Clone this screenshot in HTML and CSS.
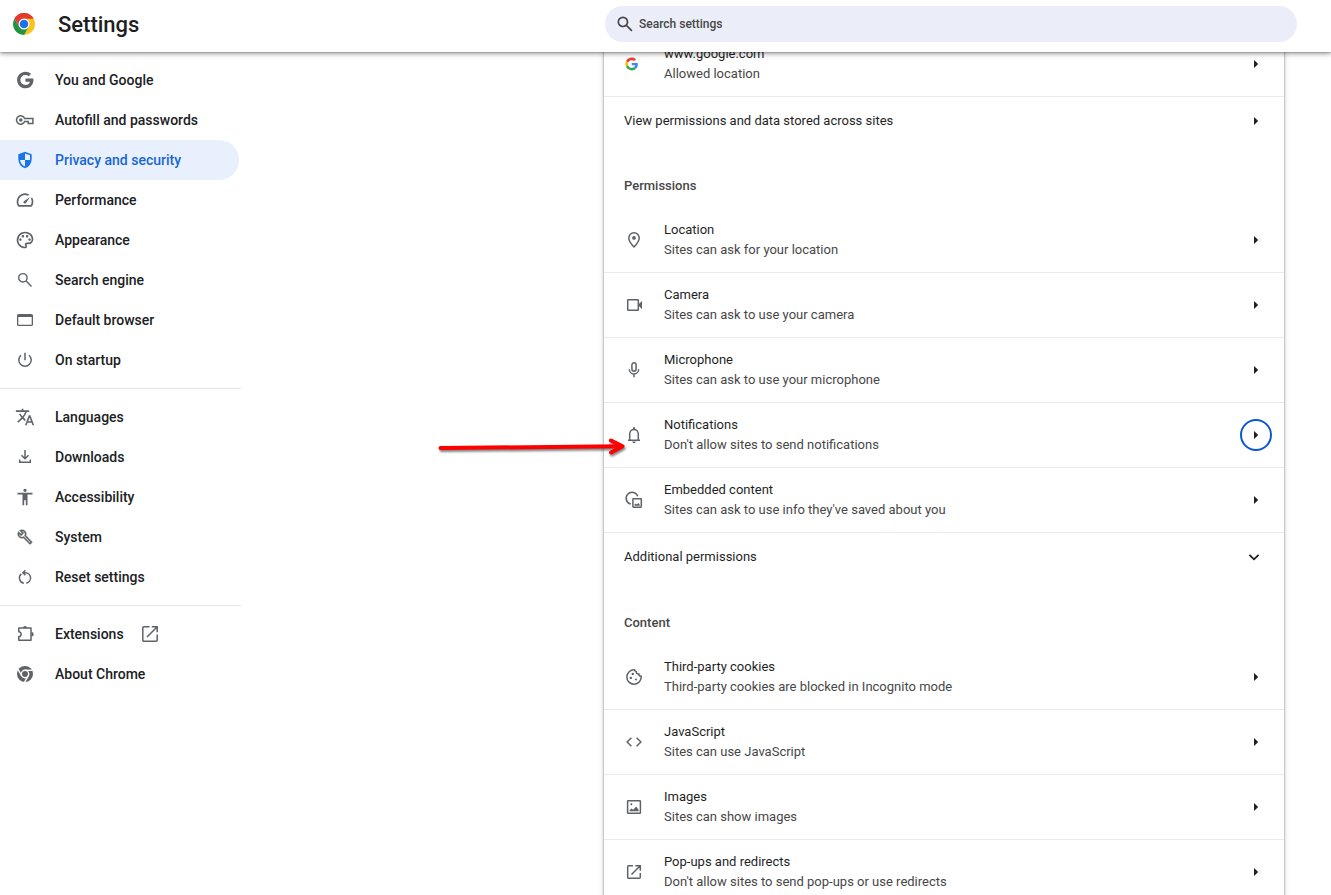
FILE: index.html
```html
<!DOCTYPE html>
<html lang="en">
<head>
<meta charset="utf-8">
<title>Settings</title>
<meta name="viewport" content="width=device-width, initial-scale=1">
<link rel="stylesheet" href="styles.css">
</head>
<body class="page">
<svg class="sprite" aria-hidden="true">
  <symbol id="i-google" viewBox="0 0 24 24"><path fill="currentColor" d="M12.545 10.239v3.821h5.445c-.712 2.315-2.647 3.972-5.445 3.972a6.033 6.033 0 1 1 0-12.064c1.498 0 2.866.549 3.921 1.453l2.814-2.814A9.97 9.97 0 0 0 12.545 2C7.021 2 2.543 6.477 2.543 12s4.478 10 10.002 10c8.396 0 10.249-7.85 9.426-11.748z"/></symbol>
  <symbol id="i-key" viewBox="0 0 20 20"><g fill="none" stroke="currentColor" stroke-width="1.5"><path d="M9.6 8.5A4.2 4.2 0 1 0 9.6 11.5H13.2V13.6H17.9V8.5Z"/></g><circle cx="5.8" cy="10" r="1.8" fill="currentColor"/></symbol>
  <symbol id="i-shield" viewBox="0 -960 960 960"><path fill="currentColor" transform="translate(960 0) scale(-1 1)" d="M480-80q-139-35-229.500-159.500T160-516v-244l320-120 320 120v244q0 152-90.500 276.500T480-80Zm0-84q97-30 162-118.500T718-480H480v-315l-240 90v207q0 7 2 18h238v316Z"/></symbol>
  <symbol id="i-speed" viewBox="0 -960 960 960"><path fill="currentColor" d="M418-340q24 24 62 23.500t56-27.500l184-276-276 184q-27 18-38.500 45t12.500 51Zm62-460q59 0 113.500 16.500T696-734l-76 48q-33-17-68.500-25.500T480-720q-133 0-226.500 93.500T160-400q0 42 11.500 83t32.500 77h552q23-38 33.500-79t10.500-85q0-36-8.500-70T766-540l48-76q30 47 47.500 100T880-404q1 59-13 112t-41 98q-11 18-30 28t-40 10H204q-21 0-40-10t-30-28q-26-45-40-95.500T80-400q0-83 31.500-155.500t86-127Q252-737 325-768.500T480-800Z"/></symbol>
  <symbol id="i-palette" viewBox="0 -960 960 960"><path fill="currentColor" d="M480-80q-82 0-155-31.500t-127.500-86Q143-252 111.500-325T80-480q0-83 32.500-156t88-127Q256-817 330-848.500T488-880q80 0 151 27.500t124.500 76q53.500 48.500 85 115T880-518q0 115-70 176.500T640-280h-74q-9 0-12.500 5t-3.500 11q0 12 15 34.500t15 51.500q0 50-27.500 74T480-80ZM260-440q26 0 43-17t17-43q0-26-17-43t-43-17q-26 0-43 17t-17 43q0 26 17 43t43 17Zm120-160q26 0 43-17t17-43q0-26-17-43t-43-17q-26 0-43 17t-17 43q0 26 17 43t43 17Zm200 0q26 0 43-17t17-43q0-26-17-43t-43-17q-26 0-43 17t-17 43q0 26 17 43t43 17Zm120 160q26 0 43-17t17-43q0-26-17-43t-43-17q-26 0-43 17t-17 43q0 26 17 43t43 17ZM480-160q9 0 14.500-5t5.500-13q0-14-15-33t-15-57q0-42 29-67t71-25h70q66 0 113-38.500T800-518q0-121-92.500-201.500T488-800q-136 0-232 93t-96 227q0 133 93.500 226.500T480-160Z"/></symbol>
  <symbol id="i-search" viewBox="0 -960 960 960"><path fill="currentColor" d="M784-120 532-372q-30 24-69 38t-83 14q-109 0-184.500-75.500T120-580q0-109 75.500-184.500T380-840q109 0 184.500 75.500T640-580q0 44-14 83t-38 69l252 252-56 56ZM380-400q75 0 127.500-52.500T560-580q0-75-52.500-127.500T380-760q-75 0-127.500 52.500T200-580q0 75 52.500 127.500T380-400Z"/></symbol>
  <symbol id="i-search-thin" viewBox="0 0 20 20"><g fill="none" stroke="currentColor" stroke-width="1.400"><circle cx="7.900" cy="7.800" r="4.200"/><path d="M10.900 10.800 16.500 16.400"/></g></symbol>
  <symbol id="i-browser" viewBox="0 0 20 20"><path fill="currentColor" fill-rule="evenodd" d="M3.500 4h13A1.500 1.500 0 0 1 18 5.500v9a1.500 1.500 0 0 1-1.500 1.500h-13A1.500 1.500 0 0 1 2 14.500v-9A1.500 1.500 0 0 1 3.500 4ZM3.300 7v7.700h13.400V7Z"/></symbol>
  <symbol id="i-power" viewBox="0 0 20 20"><path fill="none" stroke="currentColor" stroke-width="1.500" d="M10 2.800V10.200M6 5.200A6.200 6.200 0 1 0 14 5.200"/></symbol>
  <symbol id="i-translate" viewBox="0 0 24 24"><path fill="currentColor" d="M12.870 15.070l-2.540-2.510.03-.03c1.740-1.940 2.980-4.170 3.710-6.530H17V4h-7V2H8v2H1v1.990h11.170C11.500 7.920 10.440 9.750 9 11.350 8.070 10.320 7.300 9.190 6.690 8h-2c.73 1.630 1.730 3.170 2.980 4.560l-5.090 5.020L4 19l5-5 3.110 3.110.76-2.040zM18.500 10h-2L12 22h2l1.120-3h4.750L21 22h2l-4.500-12zm-2.620 7l1.620-4.330L19.120 17h-3.240z"/></symbol>
  <symbol id="i-download" viewBox="0 0 20 20"><path fill="none" stroke="currentColor" stroke-width="1.500" d="M10 3V11.500M6.500 8.300 10 11.800l3.500-3.500M4.700 12.600v2.700H15.300V12.600"/></symbol>
  <symbol id="i-access" viewBox="0 0 24 24"><path fill="currentColor" d="M12 2a2 2 0 1 1 0 4 2 2 0 0 1 0-4zm9 7h-6v13h-2v-6h-2v6H9V9H3V7h18v2z"/></symbol>
  <symbol id="i-wrench" viewBox="-3 -3 30 30"><path fill="currentColor" stroke="currentColor" stroke-width=".5" d="M22.610 18.990l-9.080-9.080c.93-2.340.45-5.100-1.440-7C9.790.61 6.210.4 3.660 2.260L7.500 6.110 6.080 7.520 2.250 3.690C.39 6.230.6 9.820 2.900 12.110c1.860 1.860 4.570 2.350 6.890 1.480l9.110 9.110c.39.39 1.020.39 1.410 0l2.300-2.300c.4-.38.4-1.010 0-1.410zm-3 1.600l-9.460-9.460c-.61.45-1.290.72-2 .82-1.360.2-2.790-.21-3.830-1.250C3.370 9.760 2.930 8.500 3 7.260l3.090 3.090 4.240-4.240-3.090-3.090c1.240-.07 2.490.37 3.440 1.310 1.080 1.080 1.490 2.570 1.240 3.960-.12.71-.42 1.370-.88 1.960l9.450 9.450-.88.89z"/></symbol>
  <symbol id="i-reset" viewBox="0 0 20 20"><path fill="none" stroke="currentColor" stroke-width="1.500" d="M8.200 5.700H10.200A5.300 5.300 0 0 1 11.300 16.200M10.400 3.200 7.900 5.700l2.500 2.500M6.400 6.900A5.300 5.300 0 0 0 8.800 16.200"/></symbol>
  <symbol id="i-extension" viewBox="0 0 20 20"><path fill="none" stroke="currentColor" stroke-width="1.500" stroke-linejoin="round" d="M3.800 4H16V8.400V16.200H3.800V12.500A2.200 2.200 0 0 0 3.800 7.800Z"/><path fill="currentColor" d="M8 4a2 2 0 0 1 4 0ZM16.500 8a2 2 0 0 1 0 4.400Z"/></symbol>
  <symbol id="i-chrome" viewBox="0 0 20 20"><circle cx="10" cy="10" r="8" fill="currentColor"/><g fill="none" stroke="#fff" stroke-width="1.400"><circle cx="10" cy="10" r="3.700"/><path d="M10 6.300H17.500"/><path d="M10 6.300H17.500" transform="rotate(120 10 10)"/><path d="M10 6.300H17.500" transform="rotate(240 10 10)"/></g></symbol>
  <symbol id="i-open" viewBox="0 0 20 20"><path fill="none" stroke="currentColor" stroke-width="1.500" d="M9.500 2.800H4A1.200 1.200 0 0 0 2.800 4V16A1.200 1.200 0 0 0 4 17.200H16A1.200 1.200 0 0 0 17.200 16V10.500M11.800 2.800H17.200V8.200M17 3 7 13"/></symbol>
  <symbol id="i-popup" viewBox="0 0 20 20"><path fill="none" stroke="currentColor" stroke-width="1.500" d="M9 3.700H4.600A1 1 0 0 0 3.700 4.700V15.400A1 1 0 0 0 4.700 16.300H15.300A1 1 0 0 0 16.300 15.300V11M11.300 3.700H16.300V8.700M16 4 7.500 12.500"/></symbol>
  <symbol id="i-location" viewBox="0 0 20 20"><path fill="none" stroke="currentColor" stroke-width="1.500" d="M10 17C7.600 14.500 4.800 11.400 4.800 8a5.200 5.200 0 0 1 10.400 0c0 3.400-2.800 6.500-5.200 9Z"/><circle cx="10" cy="7.900" r="1.900" fill="currentColor"/></symbol>
  <symbol id="i-camera" viewBox="0 0 20 20"><rect x="3.700" y="4.700" width="10.600" height="10.600" rx=".6" fill="none" stroke="currentColor" stroke-width="1.500"/><path fill="currentColor" d="M14.500 9.300 18 6v8l-3.500-3.300Z"/></symbol>
  <symbol id="i-mic" viewBox="0 0 20 20"><g fill="none" stroke="currentColor" stroke-width="1.500"><rect x="7.900" y="2.800" width="4.200" height="8.400" rx="2.100"/><path d="M5.300 9.200a4.700 4.700 0 0 0 9.400 0M10 14v3.300"/></g></symbol>
  <symbol id="i-bell" viewBox="0 0 20 20"><path fill="none" stroke="currentColor" stroke-width="1.500" d="M4 15.200H16M5.700 15.200V8.800a4.300 4.300 0 0 1 8.600 0V15.200"/><path fill="currentColor" d="M9 2.300h2V5H9ZM8.300 16.500h3.400a1.700 1.700 0 0 1-3.400 0Z"/></symbol>
  <symbol id="i-embed" viewBox="0 0 20 20"><g fill="none" stroke="currentColor" stroke-width="1.500"><path d="M13.800 6.200A6 6 0 1 0 6.700 14.100"/><rect x="8.900" y="8.700" width="8.400" height="8.500" rx=".6"/></g><path fill="currentColor" d="M10.500 15.700v-1.200l1.200-1 1.300 1.100 1.300-1.600 1.500 1.700v1Z"/></symbol>
  <symbol id="i-cookie" viewBox="0 0 20 20"><path fill="none" stroke="currentColor" stroke-width="1.500" d="M10.500 2.800A7.200 7.200 0 1 0 17.200 9.300Q14.800 9 14.700 6.900 12 7 12.200 4.600 10.800 4.300 10.500 2.800Z"/><g fill="currentColor"><circle cx="8.800" cy="6.900" r="1.200"/><circle cx="6.800" cy="10.900" r="1.200"/><circle cx="12" cy="12.400" r="1"/></g></symbol>
  <symbol id="i-code" viewBox="0 0 20 20"><path fill="none" stroke="currentColor" stroke-width="1.500" d="M7.400 5.700 3.100 10l4.300 4.300M12.600 5.700 16.900 10l-4.300 4.300"/></symbol>
  <symbol id="i-image" viewBox="0 0 20 20"><rect x="3.600" y="3.700" width="12.800" height="12.600" rx=".6" fill="none" stroke="currentColor" stroke-width="1.500"/><path fill="currentColor" d="M5.500 14.200v-1l2-1.800 1.700 1.400 3-3.200 2.500 3.300v1.300Z"/><circle cx="7.300" cy="7.200" r="1" fill="currentColor"/></symbol>
  <symbol id="i-arrow" viewBox="0 0 20 20"><path fill="currentColor" d="M8 6l4.200 4L8 14Z"/></symbol>
  <symbol id="i-chevron" viewBox="0 0 20 20"><path fill="none" stroke="currentColor" stroke-width="1.800" d="M5.400 7.800 10 12.300l4.600-4.500"/></symbol>
</svg>

<header class="toolbar">
  <svg class="logo" viewBox="0 0 48 48" aria-hidden="true">
    <path fill="#e33b2e" d="M24 24 4.950 13A22 22 0 0 1 43.050 13Z"/>
    <path fill="#fcc31e" d="M24 24V13H43.050A22 22 0 0 1 24 46Z"/>
    <path fill="#229342" d="M24 24 33.530 29.500 24 46A22 22 0 0 1 4.950 13L14.470 29.500Z"/>
    <path fill="#e33b2e" d="M24 13H43.050A22 22 0 0 0 4.950 13L14.470 29.500Z"/>
    <circle cx="24" cy="24" r="11" fill="#fff"/>
    <circle cx="24" cy="24" r="8.600" fill="#1a73e8"/>
  </svg>
  <h1 class="toolbar-title">Settings</h1>
  <label class="search">
    <svg class="icon" aria-hidden="true"><use href="#i-search"/></svg>
    <input class="search-input" type="search" placeholder="Search settings" aria-label="Search settings">
  </label>
</header>

<div class="layout">
  <nav class="menu" aria-label="Settings">
    <a class="menu-item" href="#you"><svg class="icon" aria-hidden="true"><use href="#i-google"/></svg>You and Google</a>
    <a class="menu-item" href="#autofill"><svg class="icon" aria-hidden="true"><use href="#i-key"/></svg>Autofill and passwords</a>
    <a class="menu-item menu-item-selected" href="#privacy" aria-current="page"><svg class="icon" aria-hidden="true"><use href="#i-shield"/></svg>Privacy and security</a>
    <a class="menu-item" href="#performance"><svg class="icon" aria-hidden="true"><use href="#i-speed"/></svg>Performance</a>
    <a class="menu-item" href="#appearance"><svg class="icon" aria-hidden="true"><use href="#i-palette"/></svg>Appearance</a>
    <a class="menu-item" href="#search"><svg class="icon" aria-hidden="true"><use href="#i-search-thin"/></svg>Search engine</a>
    <a class="menu-item" href="#default"><svg class="icon" aria-hidden="true"><use href="#i-browser"/></svg>Default browser</a>
    <a class="menu-item" href="#startup"><svg class="icon" aria-hidden="true"><use href="#i-power"/></svg>On startup</a>
    <hr class="menu-rule">
    <a class="menu-item" href="#languages"><svg class="icon" aria-hidden="true"><use href="#i-translate"/></svg>Languages</a>
    <a class="menu-item" href="#downloads"><svg class="icon" aria-hidden="true"><use href="#i-download"/></svg>Downloads</a>
    <a class="menu-item" href="#accessibility"><svg class="icon" aria-hidden="true"><use href="#i-access"/></svg>Accessibility</a>
    <a class="menu-item" href="#system"><svg class="icon" aria-hidden="true"><use href="#i-wrench"/></svg>System</a>
    <a class="menu-item" href="#reset"><svg class="icon" aria-hidden="true"><use href="#i-reset"/></svg>Reset settings</a>
    <hr class="menu-rule">
    <a class="menu-item" href="#extensions"><svg class="icon" aria-hidden="true"><use href="#i-extension"/></svg>Extensions<svg class="icon menu-external" aria-hidden="true"><use href="#i-open"/></svg></a>
    <a class="menu-item" href="#about"><svg class="icon" aria-hidden="true"><use href="#i-chrome"/></svg>About Chrome</a>
  </nav>

  <main class="content">
    <div class="card">
      <div class="row">
        <span class="row-icon"><svg class="favicon" viewBox="-5 -6 60 60" aria-hidden="true">
          <path fill="#ea4335" d="M24 9.500c3.540 0 6.710 1.220 9.210 3.600l6.850-6.850C35.900 2.380 30.470 0 24 0 14.620 0 6.510 5.380 2.560 13.220l7.980 6.190C12.430 13.720 17.740 9.500 24 9.500z"/>
          <path fill="#4285f4" d="M46.980 24.550c0-1.570-.15-3.090-.38-4.550H24v9.020h12.940c-.58 2.960-2.260 5.480-4.780 7.180l7.730 6c4.510-4.180 7.090-10.360 7.090-17.650z"/>
          <path fill="#fbbc05" d="M10.530 28.590c-.48-1.450-.76-2.990-.76-4.590s.27-3.140.76-4.590l-7.980-6.190A23.900 23.900 0 0 0 0 24c0 3.880.92 7.540 2.560 10.780l7.970-6.190z"/>
          <path fill="#34a853" d="M24 48c6.480 0 11.930-2.130 15.890-5.810l-7.730-6c-2.150 1.450-4.920 2.300-8.160 2.300-6.260 0-11.570-4.220-13.470-9.910l-7.980 6.190C6.510 42.620 14.620 48 24 48z"/>
        </svg></span>
        <div class="row-text"><div class="row-title" id="t-google">www.google.com</div><div class="row-sub">Allowed location</div></div>
        <button class="go" type="button" aria-labelledby="t-google"><svg class="icon" aria-hidden="true"><use href="#i-arrow"/></svg></button>
      </div>
      <div class="row row-short row-ruled">
        <div class="row-text"><div class="row-title" id="t-view">View permissions and data stored across sites</div></div>
        <button class="go" type="button" aria-labelledby="t-view"><svg class="icon" aria-hidden="true"><use href="#i-arrow"/></svg></button>
      </div>

      <h2 class="section-title">Permissions</h2>
      <div class="row">
        <span class="row-icon"><svg class="icon" aria-hidden="true"><use href="#i-location"/></svg></span>
        <div class="row-text"><div class="row-title" id="t-loc">Location</div><div class="row-sub">Sites can ask for your location</div></div>
        <button class="go" type="button" aria-labelledby="t-loc"><svg class="icon" aria-hidden="true"><use href="#i-arrow"/></svg></button>
      </div>
      <div class="row row-ruled">
        <span class="row-icon"><svg class="icon" aria-hidden="true"><use href="#i-camera"/></svg></span>
        <div class="row-text"><div class="row-title" id="t-cam">Camera</div><div class="row-sub">Sites can ask to use your camera</div></div>
        <button class="go" type="button" aria-labelledby="t-cam"><svg class="icon" aria-hidden="true"><use href="#i-arrow"/></svg></button>
      </div>
      <div class="row row-ruled">
        <span class="row-icon"><svg class="icon" aria-hidden="true"><use href="#i-mic"/></svg></span>
        <div class="row-text"><div class="row-title" id="t-mic">Microphone</div><div class="row-sub">Sites can ask to use your microphone</div></div>
        <button class="go" type="button" aria-labelledby="t-mic"><svg class="icon" aria-hidden="true"><use href="#i-arrow"/></svg></button>
      </div>
      <div class="row row-ruled">
        <span class="row-icon"><svg class="icon" aria-hidden="true"><use href="#i-bell"/></svg></span>
        <div class="row-text"><div class="row-title" id="t-not">Notifications</div><div class="row-sub">Don't allow sites to send notifications</div></div>
        <button class="go go-focused" type="button" aria-labelledby="t-not"><svg class="icon" aria-hidden="true"><use href="#i-arrow"/></svg></button>
        <svg class="pointer" viewBox="0 0 200 30" aria-hidden="true">
          <path d="M6.500 15 187 13.200" stroke-width="4"/>
          <path d="M177 7.500 188.500 13.200 177 19.500" stroke-width="4"/>
        </svg>
      </div>
      <div class="row row-ruled">
        <span class="row-icon"><svg class="icon" aria-hidden="true"><use href="#i-embed"/></svg></span>
        <div class="row-text"><div class="row-title" id="t-emb">Embedded content</div><div class="row-sub">Sites can ask to use info they've saved about you</div></div>
        <button class="go" type="button" aria-labelledby="t-emb"><svg class="icon" aria-hidden="true"><use href="#i-arrow"/></svg></button>
      </div>
      <button class="row row-short row-ruled expand" type="button" aria-expanded="false">
        <span class="row-text row-title">Additional permissions</span>
        <svg class="icon expand-icon" aria-hidden="true"><use href="#i-chevron"/></svg>
      </button>

      <h2 class="section-title">Content</h2>
      <div class="row">
        <span class="row-icon"><svg class="icon" aria-hidden="true"><use href="#i-cookie"/></svg></span>
        <div class="row-text"><div class="row-title" id="t-cook">Third-party cookies</div><div class="row-sub">Third-party cookies are blocked in Incognito mode</div></div>
        <button class="go" type="button" aria-labelledby="t-cook"><svg class="icon" aria-hidden="true"><use href="#i-arrow"/></svg></button>
      </div>
      <div class="row row-ruled">
        <span class="row-icon"><svg class="icon" aria-hidden="true"><use href="#i-code"/></svg></span>
        <div class="row-text"><div class="row-title" id="t-js">JavaScript</div><div class="row-sub">Sites can use JavaScript</div></div>
        <button class="go" type="button" aria-labelledby="t-js"><svg class="icon" aria-hidden="true"><use href="#i-arrow"/></svg></button>
      </div>
      <div class="row row-ruled">
        <span class="row-icon"><svg class="icon" aria-hidden="true"><use href="#i-image"/></svg></span>
        <div class="row-text"><div class="row-title" id="t-img">Images</div><div class="row-sub">Sites can show images</div></div>
        <button class="go" type="button" aria-labelledby="t-img"><svg class="icon" aria-hidden="true"><use href="#i-arrow"/></svg></button>
      </div>
      <div class="row row-ruled">
        <span class="row-icon"><svg class="icon" aria-hidden="true"><use href="#i-popup"/></svg></span>
        <div class="row-text"><div class="row-title" id="t-pop">Pop-ups and redirects</div><div class="row-sub">Don't allow sites to send pop-ups or use redirects</div></div>
        <button class="go" type="button" aria-labelledby="t-pop"><svg class="icon" aria-hidden="true"><use href="#i-arrow"/></svg></button>
      </div>
    </div>
  </main>
</div>
</body>
</html>
```
FILE: styles.css
```css
* {
  box-sizing: border-box;
}

.page {
  margin: 0;
  height: 100vh;
  display: flex;
  flex-direction: column;
  overflow: hidden;
  background: #fff;
  color: #1f1f1f;
  font: 400 13px/20px Roboto, "Liberation Sans", sans-serif;
}

.sprite {
  position: absolute;
  width: 0;
  height: 0;
}

.icon {
  width: 20px;
  height: 20px;
  flex: none;
  display: block;
}

/* Top bar */
.toolbar {
  position: relative;
  z-index: 1;
  flex: none;
  display: flex;
  align-items: center;
  padding: 6px 34px 10px 12px;
  background: #fff;
  box-shadow: 0 0 2px rgba(0, 0, 0, .45), 0 2px 5px rgba(0, 0, 0, .35);
}

.logo {
  width: 24px;
  height: 24px;
  flex: none;
}

.toolbar-title {
  margin: 0 auto 0 22px;
  padding-top: 2px;
  font-size: 22px;
  font-weight: 500;
  line-height: 32px;
}

.search {
  flex: 0 1 692px;
  height: 36px;
  display: flex;
  align-items: center;
  gap: 4px;
  padding: 0 10px;
  border-radius: 18px;
  background: #ebeef8;
  color: #474747;
}

.search-input {
  flex: 1;
  min-width: 0;
  padding: 0;
  border: 0;
  outline: 0;
  background: transparent;
  color: #1f1f1f;
  font: 500 12px/20px Roboto, "Liberation Sans", sans-serif;
}

.search-input::placeholder {
  color: #474747;
  opacity: 1;
}

/* Page columns */
.layout {
  flex: 1;
  min-height: 0;
  display: flex;
}

.menu {
  flex: 0 0 241px;
  padding-top: 8px;
}

.menu-item {
  display: flex;
  align-items: center;
  gap: 20px;
  height: 40px;
  margin-right: 2px;
  padding-left: 15px;
  border-radius: 0 20px 20px 0;
  color: #202124;
  font-size: 14px;
  font-weight: 500;
  text-decoration: none;
}

.menu-item .icon {
  color: #5f6368;
}

.menu-item-selected {
  background: #e8f0fe;
  color: #1967d2;
}

.menu-item-selected .icon {
  color: #1a73e8;
}

.menu-item .menu-external {
  margin-left: -4px;
}

.menu-rule {
  height: 1px;
  margin: 8px 0;
  border: 0;
  background: #e6e6e6;
}

.content {
  flex: 1;
  min-width: 0;
  display: flex;
  justify-content: flex-end;
  overflow: hidden;
  padding-right: 47px;
}

/* The list is shown part-way scrolled under the top bar. */
.card {
  flex: 0 1 680px;
  min-width: 0;
  height: max-content;
  margin-top: -20px;
  padding-bottom: 12px;
  background: #fff;
  box-shadow: 0 0 1px 1px rgba(60, 64, 67, .2), 0 1px 6px rgba(60, 64, 67, .25);
}

.row {
  position: relative;
  display: flex;
  align-items: center;
  min-height: 64px;
  padding: 0 12px 0 20px;
}

.row-short {
  min-height: 48px;
}

.row-ruled {
  border-top: 1px solid #ebebeb;
  min-height: 65px;
}

.row-short.row-ruled {
  min-height: 49px;
}

.row-icon {
  flex: 0 0 40px;
  color: #5f6368;
}

.favicon {
  display: block;
  width: 16px;
  height: 16px;
}

.row-text {
  flex: 1;
  min-width: 0;
}

.row-sub {
  color: #474747;
}

.go {
  width: 32px;
  height: 32px;
  padding: 6px;
  border: 0;
  border-radius: 50%;
  background: transparent;
  color: #1f1f1f;
}

.go-focused {
  padding: 4px;
  border: 2px solid #0b57d0;
}

.expand {
  width: 100%;
  margin-bottom: 1px;
  padding-right: 20px;
  border-width: 1px 0 0;
  background: transparent;
  color: inherit;
  font: inherit;
  text-align: left;
}

.section-title {
  margin: 0;
  padding: 31px 20px 12px;
  color: #474747;
  font-size: 13px;
  font-weight: 500;
}

.pointer {
  position: absolute;
  left: -170px;
  top: 30px;
  width: 200px;
  height: 30px;
  fill: none;
  stroke: #f00;
  stroke-linecap: round;
  stroke-linejoin: round;
  filter: drop-shadow(1px 2px 1px rgba(0, 0, 0, .5));
}
```
